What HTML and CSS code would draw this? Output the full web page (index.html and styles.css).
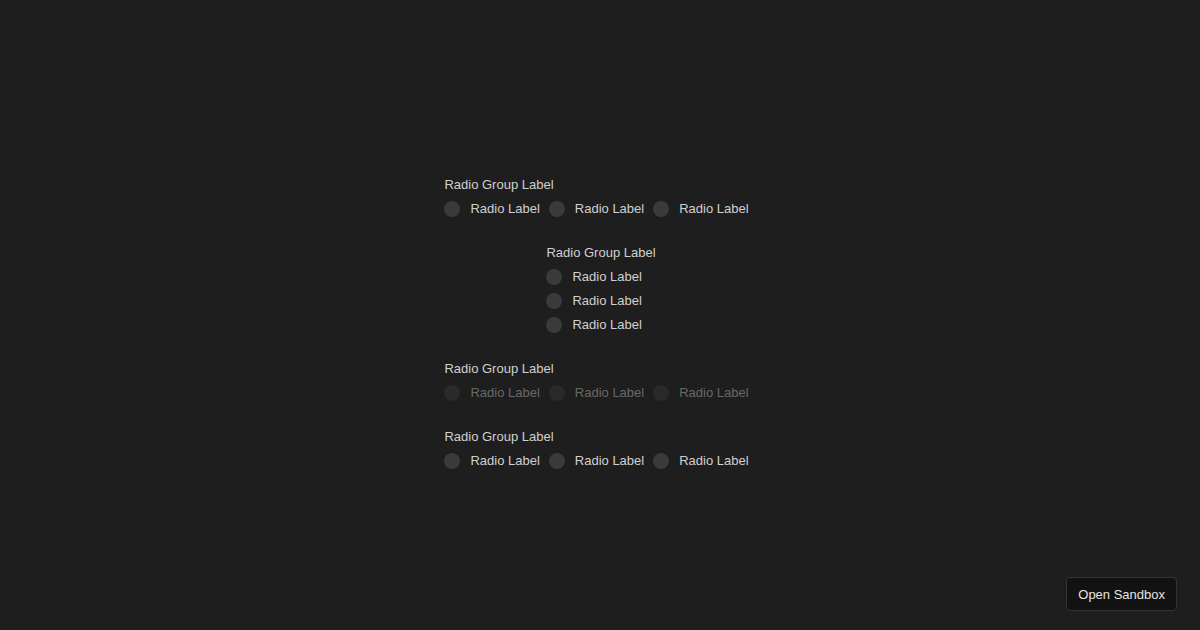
FILE: index.html
```html
<!DOCTYPE html>
<html>
<head>
<meta charset="utf-8">
<link rel="stylesheet" href="styles.css">
</head>
<body>
<main class="stage">
  <div class="group">
    <div class="group-label">Radio Group Label</div>
    <div class="options row">
      <label class="option"><span class="dot"></span><span class="text">Radio Label</span></label>
      <label class="option"><span class="dot"></span><span class="text">Radio Label</span></label>
      <label class="option"><span class="dot"></span><span class="text">Radio Label</span></label>
    </div>
  </div>
  <div class="group">
    <div class="group-label">Radio Group Label</div>
    <div class="options column">
      <label class="option"><span class="dot"></span><span class="text">Radio Label</span></label>
      <label class="option"><span class="dot"></span><span class="text">Radio Label</span></label>
      <label class="option"><span class="dot"></span><span class="text">Radio Label</span></label>
    </div>
  </div>
  <div class="group disabled">
    <div class="group-label">Radio Group Label</div>
    <div class="options row">
      <label class="option"><span class="dot"></span><span class="text">Radio Label</span></label>
      <label class="option"><span class="dot"></span><span class="text">Radio Label</span></label>
      <label class="option"><span class="dot"></span><span class="text">Radio Label</span></label>
    </div>
  </div>
  <div class="group">
    <div class="group-label">Radio Group Label</div>
    <div class="options row">
      <label class="option"><span class="dot"></span><span class="text">Radio Label</span></label>
      <label class="option"><span class="dot"></span><span class="text">Radio Label</span></label>
      <label class="option"><span class="dot"></span><span class="text">Radio Label</span></label>
    </div>
  </div>
</main>
<button class="sandbox">Open Sandbox</button>
</body>
</html>
```
FILE: styles.css
```css
html, body {
  margin: 0;
  padding: 0;
  height: 100%;
}
body {
  background: #1e1e1e;
  font-family: "Liberation Sans", Arial, sans-serif;
  font-size: 13px;
  color: #d0d0d0;
  overflow: hidden;
}
.stage {
  height: 630px;
  box-sizing: border-box;
  padding-top: 175px;
  padding-left: 2px;
  display: flex;
  flex-direction: column;
  align-items: center;
  gap: 24px;
}
.group {
  display: flex;
  flex-direction: column;
  gap: 4px;
}
.group-label {
  height: 20px;
  line-height: 20px;
  color: #d0d0d0;
}
.options {
  display: flex;
  gap: 4px;
}
.options.row {
  flex-direction: row;
  gap: 0;
}
.options.column {
  flex-direction: column;
}
.option {
  display: flex;
  align-items: center;
  height: 20px;
  gap: 10px;
  margin-right: 9px;
}
.dot {
  width: 16px;
  height: 16px;
  border-radius: 50%;
  background: #3a3a3a;
  flex: none;
}
.text {
  line-height: 20px;
}
.disabled .text {
  color: #686868;
}
.disabled .dot {
  background: #2a2a2a;
}
.sandbox {
  position: absolute;
  right: 23px;
  bottom: 19px;
  height: 34px;
  padding: 0 11px;
  background: #121212;
  border: 1px solid #333333;
  border-radius: 4px;
  color: #e4e4e4;
  font-family: "Liberation Sans", Arial, sans-serif;
  font-size: 13px;
}
```
